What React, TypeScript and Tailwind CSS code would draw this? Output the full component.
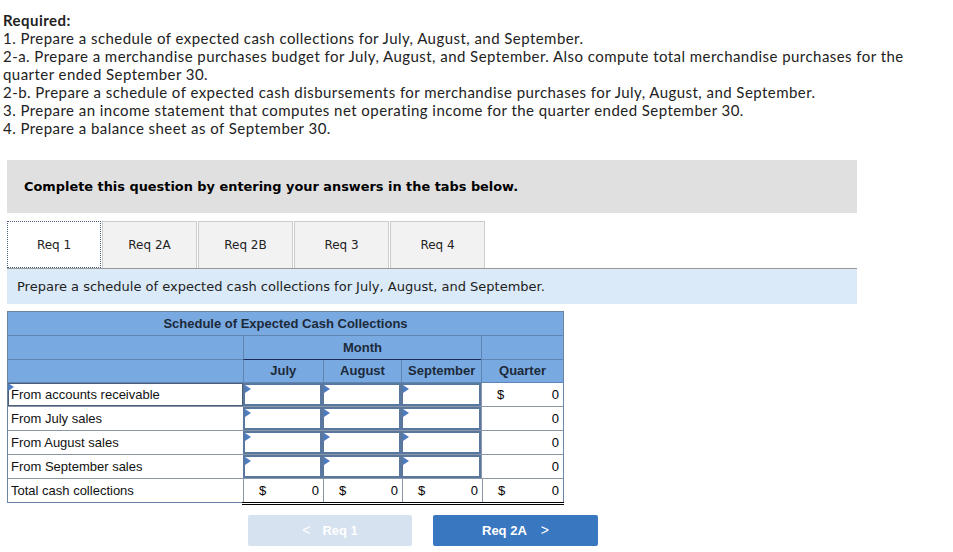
import React from "react";

const rows = [
  "From accounts receivable",
  "From July sales",
  "From August sales",
  "From September sales",
];

function InputCell({ w }: { w: string }) {
  return (
    <div className={`${w} relative h-full border-2 border-[#5a77a0] bg-white`}>
      <svg className="absolute left-0 top-0" width="6" height="8" viewBox="0 0 6 8">
        <polygon points="0,0 6,4 0,8" fill="#4d7cc0" />
      </svg>
    </div>
  );
}

export default function App() {
  return (
    <div className="w-[953px] h-[552px] bg-white overflow-hidden relative">
      <div className="pl-[3px] pt-[11px] text-[15px] leading-[18px] tracking-[0.45px] text-[#222]" style={{ fontFamily: "Lato, 'Open Sans', sans-serif" }}>
        <div className="font-bold">Required:</div>
        <div>1. Prepare a schedule of expected cash collections for July, August, and September.</div>
        <div className="w-[930px]">2-a. Prepare a merchandise purchases budget for July, August, and September. Also compute total merchandise purchases for the quarter ended September 30.</div>
        <div>2-b. Prepare a schedule of expected cash disbursements for merchandise purchases for July, August, and September.</div>
        <div>3. Prepare an income statement that computes net operating income for the quarter ended September 30.</div>
        <div>4. Prepare a balance sheet as of September 30.</div>
      </div>

      <div className="ml-[7px] mt-[23px] w-[850px]" style={{ fontFamily: "'DejaVu Sans', Verdana, sans-serif" }}>
        <div className="h-[53px] bg-[#e0e0e0] flex items-center pl-[17px] text-[12.9px] font-bold text-black">
          Complete this question by entering your answers in the tabs below.
        </div>
        <div className="mt-[8px] flex h-[47px] items-stretch text-[12px] text-[#222]">
          <div className="w-[94px] bg-white border border-dotted border-[#4a5a78] flex items-center justify-center">Req 1</div>
          {["Req 2A", "Req 2B", "Req 3", "Req 4"].map((t) => (
            <div key={t} className="w-[95px] ml-[1px] bg-[#f2f2f2] border border-b-0 border-[#cccccc] flex items-center justify-center">
              {t}
            </div>
          ))}
        </div>
        <div className="h-[36px] bg-[#dbeaf8] border-t border-[#999999] flex items-center pl-[10px] text-[13px] text-[#222]">
          Prepare a schedule of expected cash collections for July, August, and September.
        </div>
      </div>

      <div className="ml-[7px] mt-[7px] w-[557px] text-[13px] text-black" style={{ fontFamily: "'Liberation Sans', Arial, sans-serif" }}>
        <div className="border border-[#6b85a6]">
          <div className="h-[23px] bg-[#79a9e1] flex items-center justify-center font-bold text-[#1c2a3a]">
            Schedule of Expected Cash Collections
          </div>
          <div className="h-[24px] flex bg-[#79a9e1] border-t border-[#5f86b3] font-bold text-[#1c2a3a]">
            <div className="w-[235px]" />
            <div className="w-[238px] border-l border-[#5f86b3] flex items-center justify-center">Month</div>
            <div className="flex-1 border-l border-[#5f86b3]" />
          </div>
          <div className="h-[23px] flex bg-[#79a9e1] border-t border-[#5f86b3] font-bold text-[#1c2a3a]">
            <div className="w-[235px]" />
            <div className="w-[238px] flex border-l border-[#5f86b3] border-t border-t-[#1d2a5a] -mt-[1px]">
              <div className="w-[79px] flex items-center justify-center">July</div>
              <div className="w-[79px] border-l border-[#5f86b3] flex items-center justify-center">August</div>
              <div className="w-[80px] border-l border-[#5f86b3] flex items-center justify-center">September</div>
            </div>
            <div className="flex-1 border-l border-[#5f86b3] flex items-center justify-center">Quarter</div>
          </div>
          {rows.map((r, i) => (
            <div key={r} className={`h-[24px] flex bg-white border-t ${i === 0 ? "border-[#5f86b3]" : "border-[#8a96a6]"}`}>
              <div className={`w-[235px] relative flex items-center pl-[3px] text-[#111] ${i === 0 ? "outline outline-1 outline-[#4d5f78] -outline-offset-1" : ""}`}>
                {i === 0 && (
                  <svg className="absolute left-0 top-0" width="6" height="8" viewBox="0 0 6 8">
                    <polygon points="0,0 6,4 0,8" fill="#4d7cc0" />
                  </svg>
                )}
                {r}
              </div>
              <div className="w-[238px] flex">
                <InputCell w="w-[79px]" />
                <InputCell w="w-[79px]" />
                <InputCell w="w-[80px]" />
              </div>
              <div className="flex-1 border-l border-[#8a96a6] flex items-center justify-between pl-[15px] pr-[4px]">
                <span>{i === 0 ? "$" : ""}</span>
                <span>0</span>
              </div>
            </div>
          ))}
          <div className="h-[24px] flex bg-white border-t border-[#8a96a6]">
            <div className="w-[235px] flex items-center pl-[3px] text-[#111]">Total cash collections</div>
            <div className="flex-1 flex border-l border-[#8a96a6]">
              {["w-[79px]", "w-[79px] border-l border-[#8a96a6]", "w-[80px] border-l border-[#8a96a6]", "flex-1 border-l border-[#8a96a6]"].map((c, k) => (
                <div key={k} className={`${c} flex items-center justify-between pl-[15px] pr-[4px]`}>
                  <span>$</span>
                  <span>0</span>
                </div>
              ))}
            </div>
          </div>
        </div>
        <div className="flex">
          <div className="w-[235px]" />
          <div className="flex-1 border-b-[3px] border-double border-black -mt-[1px]" />
        </div>
      </div>

      <div className="mt-[10px] ml-[248px] flex gap-[21px]" style={{ fontFamily: "'Liberation Sans', Arial, sans-serif" }}>
        <div className="w-[164px] h-[31px] rounded-[2px] bg-[#d6e2f0] flex items-center justify-center text-white font-bold text-[13px]">
          <span className="mr-[12px] text-[14px] font-normal">&lt;</span>Req 1
        </div>
        <div className="w-[165px] h-[31px] rounded-[2px] bg-[#3a77c1] flex items-center justify-center text-white font-bold text-[13px]">
          Req 2A<span className="ml-[14px] text-[14px] font-normal">&gt;</span>
        </div>
      </div>
    </div>
  );
}
